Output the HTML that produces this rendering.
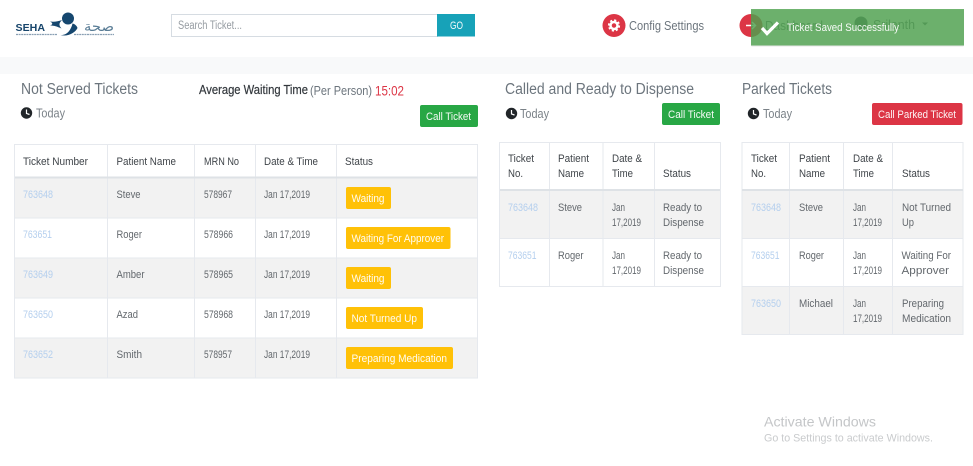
<!DOCTYPE html>
<html lang="en"><head><meta charset="utf-8"><title>Tickets</title>
<style>
html,body{margin:0;padding:0;background:#fff;width:973px;height:466px;overflow:hidden}
svg{display:block;filter:blur(.3px)}
text{font-family:"Liberation Sans","DejaVu Sans",sans-serif;font-size:11px;fill:#63686d}
.h{fill:#3f4449}
.l{fill:#b4cfee}
.w{fill:#fff}
.ti{font-size:15.5px;fill:#6c757d}
.td{font-size:12.5px;fill:#7b8288}
.bt{font-size:11px;fill:#fff;opacity:.95}
.b{fill:#ffc107}
.ln{stroke:#e6e9ee;stroke-width:1;fill:none}
.hl{stroke:#dee2e6;stroke-width:2}
</style></head><body>
<svg width="973" height="466" viewBox="0 0 973 466" xmlns="http://www.w3.org/2000/svg">
<rect width="973" height="466" fill="#fff"/>
<rect x="0" y="57" width="973" height="17" fill="#f8f9fa"/>

<!-- logo -->
<text x="15.500" y="31" textLength="29.500" lengthAdjust="spacingAndGlyphs" style="font-size:10px;font-weight:bold;fill:#17456b">SEHA</text>
<line x1="16" y1="34.500" x2="57" y2="34.500" stroke="#8aa0b4" stroke-width="1.200" stroke-dasharray="2 .6"/>
<line x1="74" y1="34.500" x2="114" y2="34.500" stroke="#8aa0b4" stroke-width="1.200" stroke-dasharray="2 .6"/>
<circle cx="68" cy="18.500" r="6" fill="#16476f"/>
<path d="M50 21.500C54 22 58 21.500 62 20C59 23 58.500 25 61.500 28.500C57 26.500 54 25.500 50 25.500C53 24.500 53 23 50 21.500Z" fill="#16476f"/>
<path d="M60.500 35C67 35.500 71 30 72.500 23.500C75 24 77 26 77.500 28C75.500 32.500 68 37 60.500 35Z" fill="#16476f"/>
<text x="84" y="31" textLength="30" lengthAdjust="spacingAndGlyphs" style="font-size:14px;fill:#5a7d96">صحة</text>

<!-- search -->
<rect x="171.500" y="14.500" width="266" height="22" fill="#fff" stroke="#d6dce2"/>
<text x="178" y="29" textLength="64" lengthAdjust="spacingAndGlyphs" style="font-size:11.500px;fill:#969ca2">Search Ticket...</text>
<rect x="437" y="14" width="38" height="22.500" fill="#17a2b8"/>
<text x="450" y="29" textLength="13" lengthAdjust="spacingAndGlyphs" class="bt">GO</text>

<!-- config -->
<circle cx="614" cy="25.500" r="11.500" fill="#dc3545"/>
<circle cx="614" cy="25.500" r="3.500" fill="none" stroke="#fff" stroke-width="2.500"/>
<circle cx="614" cy="25.500" r="5.300" fill="none" stroke="#fff" stroke-width="1.600" stroke-dasharray="2.200 1.950"/>
<text x="629" y="30" textLength="75" lengthAdjust="spacingAndGlyphs" style="font-size:13px;fill:#6c757d">Config Settings</text>

<!-- dashboard under toast -->
<circle cx="751" cy="25.500" r="11.500" fill="#dc3545"/>
<path d="M746 25.500H755M752 22L755.500 25.500L752 29" stroke="#fff" stroke-width="1.500" fill="none"/>
<text x="765" y="30" textLength="58" lengthAdjust="spacingAndGlyphs" style="font-size:13px;fill:#6c757d">Dashboard</text>
<circle cx="861" cy="23" r="6.500" fill="#55606a"/>
<text x="873" y="29" textLength="42" lengthAdjust="spacingAndGlyphs" style="font-size:13px;fill:#6c757d">Srilanth</text>
<path d="M922 22.500H928L925 25.500Z" fill="#6c757d"/>

<!-- toast -->
<rect x="751" y="9" width="213" height="36.500" rx="1" fill="#000" opacity=".1" transform="translate(0 1)"/>
<rect x="751" y="9" width="213" height="36.500" fill="#51a351" fill-opacity=".82"/>
<path d="M762 28L767 33.500L778 22.500" stroke="#fff" stroke-width="3.200" fill="none"/>
<text x="787" y="31" textLength="112" lengthAdjust="spacingAndGlyphs" class="bt">Ticket Saved Successfully</text>

<!-- headings -->
<text x="21" y="94" textLength="117" lengthAdjust="spacingAndGlyphs" class="ti">Not Served Tickets</text>
<text x="199" y="94" textLength="109" lengthAdjust="spacingAndGlyphs" style="font-size:12.500px;fill:#33383d;stroke:#33383d;stroke-width:.2">Average Waiting Time</text>
<text x="310" y="95" textLength="62" lengthAdjust="spacingAndGlyphs" style="font-size:12.500px;fill:#6c757d">(Per Person)</text>
<text x="375" y="95.500" textLength="29" lengthAdjust="spacingAndGlyphs" style="font-size:14px;fill:#dc3545">15:02</text>
<text x="505" y="94" textLength="189" lengthAdjust="spacingAndGlyphs" class="ti">Called and Ready to Dispense</text>
<text x="742" y="94" textLength="90" lengthAdjust="spacingAndGlyphs" class="ti">Parked Tickets</text>

<!-- today -->
<g fill="#212529"><circle cx="26.500" cy="113" r="5.700"/><circle cx="511.500" cy="113.500" r="5.700"/><circle cx="753.500" cy="113.500" r="5.700"/></g>
<g stroke="#fff" stroke-width="1.200" fill="none"><path d="M26.500 109.500V113.500L29.500 114.500"/><path d="M511.500 110V114L514.500 115"/><path d="M753.500 110V114L756.500 115"/></g>
<text x="36" y="117.500" textLength="29" lengthAdjust="spacingAndGlyphs" class="td">Today</text>
<text x="520" y="118" textLength="29" lengthAdjust="spacingAndGlyphs" class="td">Today</text>
<text x="763" y="118" textLength="29" lengthAdjust="spacingAndGlyphs" class="td">Today</text>

<!-- buttons -->
<rect x="420" y="105" width="58" height="22" rx="2" fill="#28a745"/>
<text x="426" y="120" textLength="45" lengthAdjust="spacingAndGlyphs" class="bt">Call Ticket</text>
<rect x="662" y="103" width="58" height="22" rx="2" fill="#28a745"/>
<text x="668" y="118" textLength="46" lengthAdjust="spacingAndGlyphs" class="bt">Call Ticket</text>
<rect x="872" y="103" width="90.500" height="22" rx="2" fill="#dc3545"/>
<text x="878" y="118" textLength="78" lengthAdjust="spacingAndGlyphs" class="bt">Call Parked Ticket</text>

<!-- table 1 -->
<rect x="15" y="178" width="462" height="40" fill="#f2f2f2"/>
<rect x="15" y="258" width="462" height="40" fill="#f2f2f2"/>
<rect x="15" y="338" width="462" height="40" fill="#f2f2f2"/>
<path class="ln" d="M14.500 144.500H477.500V378H14.500ZM14.500 218H477.500M14.500 258H477.500M14.500 298H477.500M14.500 338H477.500M107.500 144.500V378M194.500 144.500V378M255.500 144.500V378M336.500 144.500V378"/>
<line class="hl" x1="15" y1="177.500" x2="477" y2="177.500"/>
<text class="h" x="23" y="165" textLength="65" lengthAdjust="spacingAndGlyphs">Ticket Number</text>
<text class="h" x="116.500" y="165" textLength="59.500" lengthAdjust="spacingAndGlyphs">Patient Name</text>
<text class="h" x="204" y="165" textLength="35" lengthAdjust="spacingAndGlyphs">MRN No</text>
<text class="h" x="264" y="165" textLength="54" lengthAdjust="spacingAndGlyphs">Date &amp; Time</text>
<text class="h" x="345" y="165" textLength="28" lengthAdjust="spacingAndGlyphs">Status</text>

<text class="l" x="23" y="198" textLength="30" lengthAdjust="spacingAndGlyphs">763648</text>
<text x="116.500" y="198" textLength="24" lengthAdjust="spacingAndGlyphs">Steve</text>
<text x="204" y="198" textLength="28" lengthAdjust="spacingAndGlyphs">578967</text>
<text x="264" y="198" textLength="46" lengthAdjust="spacingAndGlyphs">Jan 17,2019</text>
<rect class="b" x="346" y="187" width="45" height="22" rx="2"/>
<text class="bt" x="351.500" y="202" textLength="33" lengthAdjust="spacingAndGlyphs">Waiting</text>

<text class="l" x="23" y="238" textLength="29" lengthAdjust="spacingAndGlyphs">763651</text>
<text x="116.500" y="238" textLength="25.500" lengthAdjust="spacingAndGlyphs">Roger</text>
<text x="204" y="238" textLength="29" lengthAdjust="spacingAndGlyphs">578966</text>
<text x="264" y="238" textLength="46" lengthAdjust="spacingAndGlyphs">Jan 17,2019</text>
<rect class="b" x="346" y="227" width="104.500" height="22" rx="2"/>
<text class="bt" x="351.500" y="242" textLength="92.500" lengthAdjust="spacingAndGlyphs">Waiting For Approver</text>

<text class="l" x="23" y="278" textLength="30" lengthAdjust="spacingAndGlyphs">763649</text>
<text x="116.500" y="278" textLength="28" lengthAdjust="spacingAndGlyphs">Amber</text>
<text x="204" y="278" textLength="29" lengthAdjust="spacingAndGlyphs">578965</text>
<text x="264" y="278" textLength="46" lengthAdjust="spacingAndGlyphs">Jan 17,2019</text>
<rect class="b" x="346" y="267" width="45" height="22" rx="2"/>
<text class="bt" x="351.500" y="282" textLength="33" lengthAdjust="spacingAndGlyphs">Waiting</text>

<text class="l" x="23" y="318" textLength="30" lengthAdjust="spacingAndGlyphs">763650</text>
<text x="116.500" y="318" textLength="21.500" lengthAdjust="spacingAndGlyphs">Azad</text>
<text x="204" y="318" textLength="29" lengthAdjust="spacingAndGlyphs">578968</text>
<text x="264" y="318" textLength="46" lengthAdjust="spacingAndGlyphs">Jan 17,2019</text>
<rect class="b" x="346" y="307" width="77" height="22" rx="2"/>
<text class="bt" x="351.500" y="322" textLength="65.500" lengthAdjust="spacingAndGlyphs">Not Turned Up</text>

<text class="l" x="23" y="358" textLength="30" lengthAdjust="spacingAndGlyphs">763652</text>
<text x="116.500" y="358" textLength="25.500" lengthAdjust="spacingAndGlyphs">Smith</text>
<text x="204" y="358" textLength="28" lengthAdjust="spacingAndGlyphs">578957</text>
<text x="264" y="358" textLength="46" lengthAdjust="spacingAndGlyphs">Jan 17,2019</text>
<rect class="b" x="346" y="347" width="107" height="22" rx="2"/>
<text class="bt" x="351.500" y="362" textLength="95.500" lengthAdjust="spacingAndGlyphs">Preparing Medication</text>

<!-- table 2 -->
<rect x="500" y="190.500" width="220" height="48" fill="#f2f2f2"/>
<path class="ln" d="M499.500 142.500H720.500V286.500H499.500ZM499.500 238.500H720.500M549.500 142.500V286.500M603 142.500V286.500M654.500 142.500V286.500"/>
<line class="hl" x1="500" y1="190" x2="720" y2="190"/>
<text class="h" x="508" y="162" textLength="26" lengthAdjust="spacingAndGlyphs">Ticket</text>
<text class="h" x="508" y="177" textLength="15" lengthAdjust="spacingAndGlyphs">No.</text>
<text class="h" x="558" y="162" textLength="31" lengthAdjust="spacingAndGlyphs">Patient</text>
<text class="h" x="558" y="177" textLength="26" lengthAdjust="spacingAndGlyphs">Name</text>
<text class="h" x="612" y="162" textLength="30" lengthAdjust="spacingAndGlyphs">Date &amp;</text>
<text class="h" x="612" y="177" textLength="21" lengthAdjust="spacingAndGlyphs">Time</text>
<text class="h" x="663" y="177" textLength="28" lengthAdjust="spacingAndGlyphs">Status</text>

<text class="l" x="508" y="211" textLength="30" lengthAdjust="spacingAndGlyphs">763648</text>
<text x="558" y="211" textLength="24" lengthAdjust="spacingAndGlyphs">Steve</text>
<text x="612" y="211" textLength="13" lengthAdjust="spacingAndGlyphs">Jan</text>
<text x="612" y="226" textLength="29" lengthAdjust="spacingAndGlyphs">17,2019</text>
<text x="663" y="211" textLength="39" lengthAdjust="spacingAndGlyphs">Ready to</text>
<text x="663" y="226" textLength="41" lengthAdjust="spacingAndGlyphs">Dispense</text>

<text class="l" x="508" y="259" textLength="28.500" lengthAdjust="spacingAndGlyphs">763651</text>
<text x="558" y="259" textLength="25.500" lengthAdjust="spacingAndGlyphs">Roger</text>
<text x="612" y="259" textLength="13" lengthAdjust="spacingAndGlyphs">Jan</text>
<text x="612" y="274" textLength="29" lengthAdjust="spacingAndGlyphs">17,2019</text>
<text x="663" y="259" textLength="39" lengthAdjust="spacingAndGlyphs">Ready to</text>
<text x="663" y="274" textLength="41" lengthAdjust="spacingAndGlyphs">Dispense</text>

<!-- table 3 -->
<rect x="742" y="190.500" width="221" height="48" fill="#f2f2f2"/>
<rect x="742" y="286.500" width="221" height="48" fill="#f2f2f2"/>
<path class="ln" d="M742 142.500H963V334.500H742ZM742 238.500H963M742 286.500H963M789.500 142.500V334.500M843.500 142.500V334.500M892.500 142.500V334.500"/>
<line class="hl" x1="742" y1="190" x2="963" y2="190"/>
<text class="h" x="751" y="162" textLength="26" lengthAdjust="spacingAndGlyphs">Ticket</text>
<text class="h" x="751" y="177" textLength="15" lengthAdjust="spacingAndGlyphs">No.</text>
<text class="h" x="799" y="162" textLength="31" lengthAdjust="spacingAndGlyphs">Patient</text>
<text class="h" x="799" y="177" textLength="26" lengthAdjust="spacingAndGlyphs">Name</text>
<text class="h" x="853" y="162" textLength="30" lengthAdjust="spacingAndGlyphs">Date &amp;</text>
<text class="h" x="853" y="177" textLength="21" lengthAdjust="spacingAndGlyphs">Time</text>
<text class="h" x="902" y="177" textLength="28" lengthAdjust="spacingAndGlyphs">Status</text>

<text class="l" x="751" y="211" textLength="30" lengthAdjust="spacingAndGlyphs">763648</text>
<text x="799" y="211" textLength="24" lengthAdjust="spacingAndGlyphs">Steve</text>
<text x="853" y="211" textLength="13" lengthAdjust="spacingAndGlyphs">Jan</text>
<text x="853" y="226" textLength="29" lengthAdjust="spacingAndGlyphs">17,2019</text>
<text x="902" y="211" textLength="49" lengthAdjust="spacingAndGlyphs">Not Turned</text>
<text x="902" y="226" textLength="12" lengthAdjust="spacingAndGlyphs">Up</text>

<text class="l" x="751" y="259" textLength="28.500" lengthAdjust="spacingAndGlyphs">763651</text>
<text x="799" y="259" textLength="25" lengthAdjust="spacingAndGlyphs">Roger</text>
<text x="853" y="259" textLength="13" lengthAdjust="spacingAndGlyphs">Jan</text>
<text x="853" y="274" textLength="29" lengthAdjust="spacingAndGlyphs">17,2019</text>
<text x="901.500" y="259" textLength="49.500" lengthAdjust="spacingAndGlyphs">Waiting For</text>
<text x="901.500" y="274" textLength="47.500" lengthAdjust="spacingAndGlyphs">Approver</text>

<text class="l" x="751" y="307" textLength="30" lengthAdjust="spacingAndGlyphs">763650</text>
<text x="799" y="307" textLength="34" lengthAdjust="spacingAndGlyphs">Michael</text>
<text x="853" y="307" textLength="13" lengthAdjust="spacingAndGlyphs">Jan</text>
<text x="853" y="322" textLength="29" lengthAdjust="spacingAndGlyphs">17,2019</text>
<text x="902" y="307" textLength="42" lengthAdjust="spacingAndGlyphs">Preparing</text>
<text x="902" y="322" textLength="49" lengthAdjust="spacingAndGlyphs">Medication</text>

<!-- watermark -->
<text x="764" y="426.500" textLength="112" lengthAdjust="spacingAndGlyphs" style="font-size:14px;fill:#c4c6c8">Activate Windows</text>
<text x="764" y="441.500" textLength="169" lengthAdjust="spacingAndGlyphs" style="font-size:11px;fill:#c9cbcd">Go to Settings to activate Windows.</text>
</svg>
</body></html>
